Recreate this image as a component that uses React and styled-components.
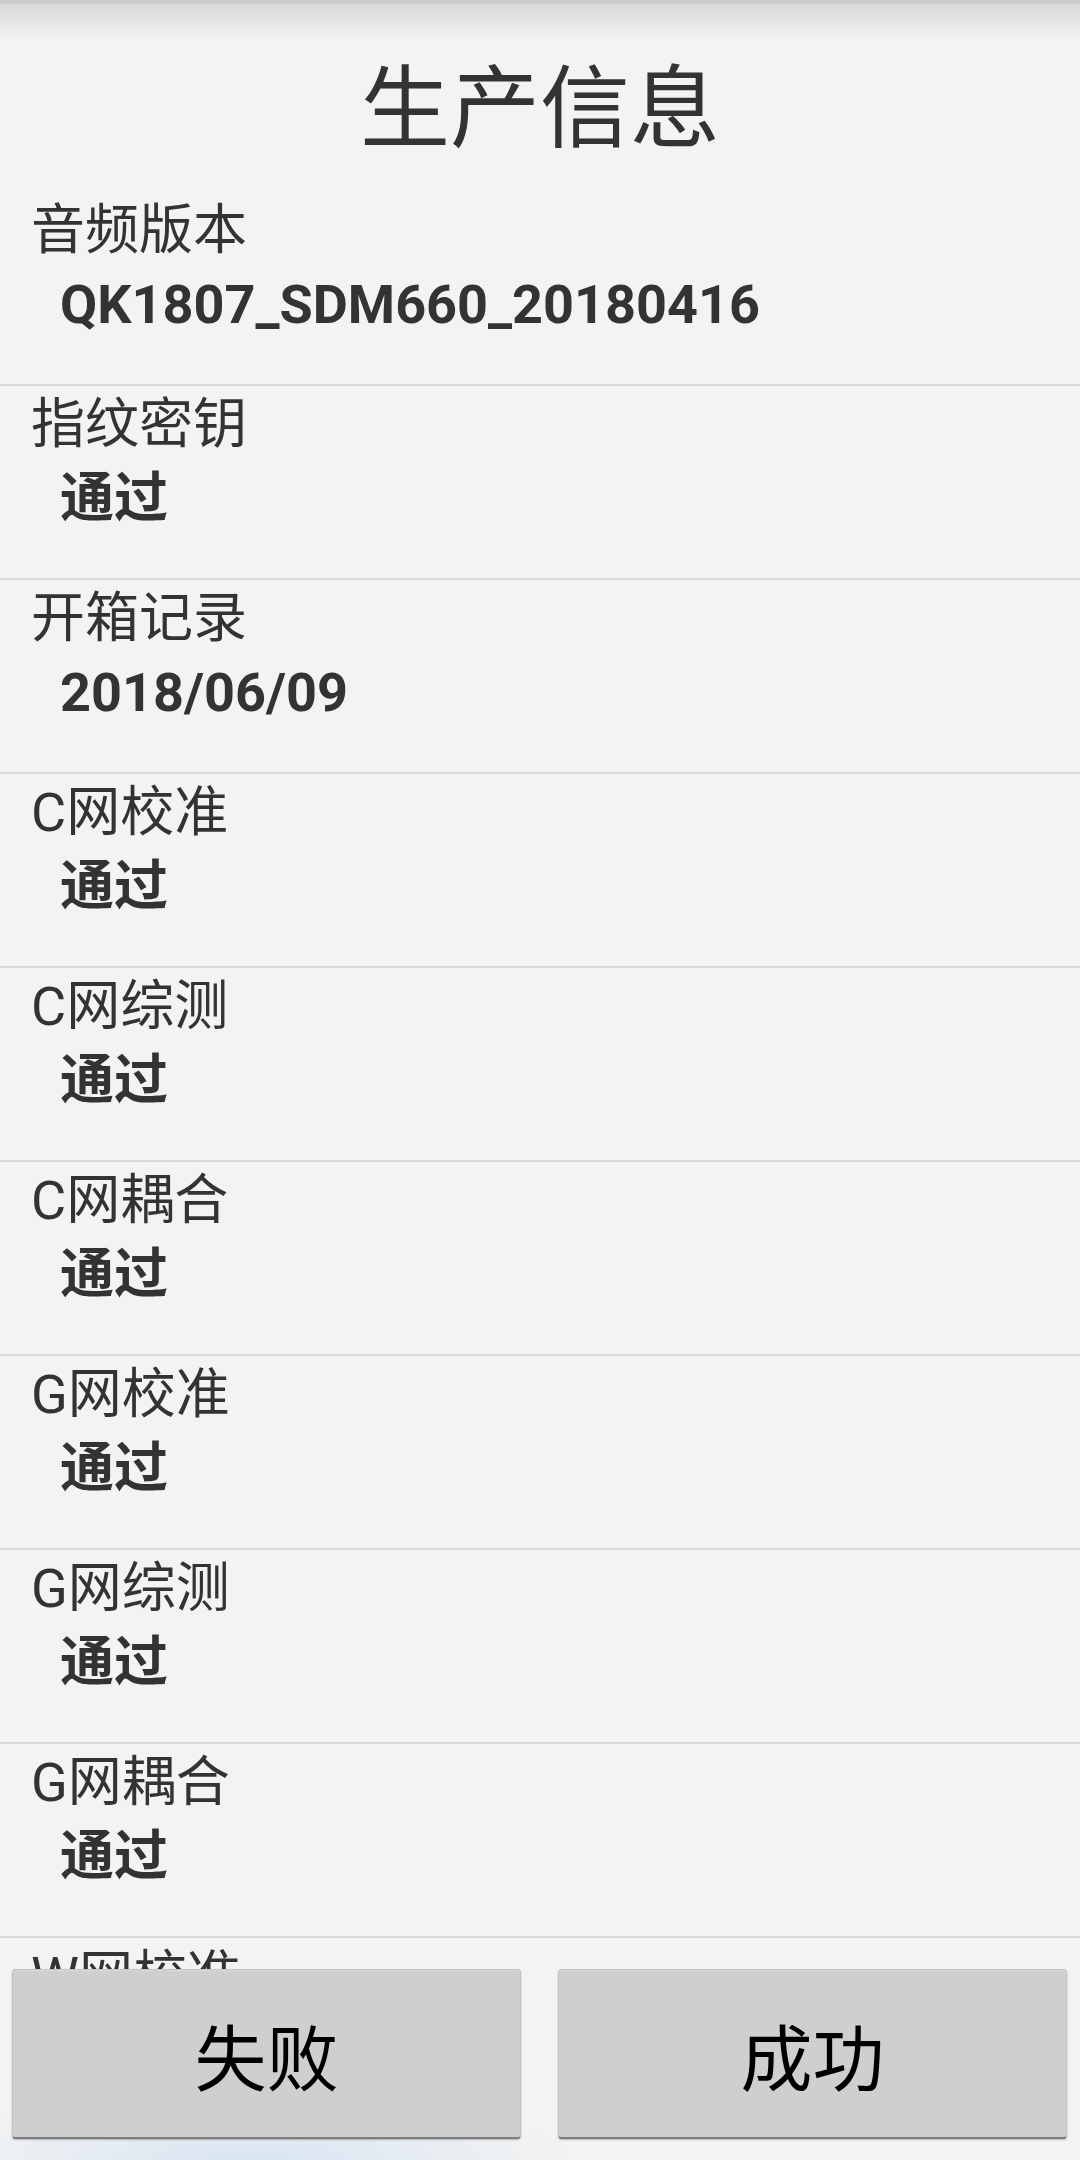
import React from 'react'
import styled, { createGlobalStyle } from 'styled-components'

const GlobalStyle = createGlobalStyle`
  html, body {
    margin: 0;
    padding: 0;
  }
  body {
    font-family: Roboto, "Noto Sans CJK SC", sans-serif;
    background: #f3f3f3;
  }
`

const Page = styled.div`
  width: 1080px;
  height: 2160px;
  display: flex;
  flex-direction: column;
  overflow: hidden;
  background:
    radial-gradient(ellipse 320px 70px at 250px 2160px, rgba(214, 228, 242, 0.95), rgba(243, 243, 243, 0)),
    linear-gradient(to bottom, #c9c9c9 0, #c9c9c9 3px, #d8d8d8 4px, #f3f3f3 40px, #f3f3f3 100%);
  color: #333333;
`

const Header = styled.div`
  height: 192px;
  flex-shrink: 0;
  box-sizing: border-box;
  padding-top: 27px;
  display: flex;
  justify-content: center;
  align-items: center;
`

const Title = styled.h1`
  margin: 0;
  font-size: 90px;
  line-height: 100px;
  font-weight: 400;
  color: #333333;
`

const List = styled.div`
  flex: 1;
  overflow: hidden;
`

const Row = styled.div`
  height: 192px;
  box-sizing: content-box;
  border-bottom: 2px solid #d9d9d9;
  padding: 0 0 0 31px;
  display: flex;
  flex-direction: column;
`

const Label = styled.div`
  margin-top: 7px;
  font-size: 54px;
  line-height: 64px;
  color: #333333;
`

const Value = styled.div`
  margin-top: 10px;
  padding-left: 29px;
  font-size: 54px;
  line-height: 64px;
  font-weight: 700;
  color: #333333;
`

const ButtonBar = styled.div`
  flex-shrink: 0;
  display: flex;
  gap: 37px;
  padding: 0 13px 21px 12px;
`

const Button = styled.button`
  flex: 1;
  height: 170px;
  background: #cfcfcf;
  border: 1px solid #c2c2c2;
  border-bottom: 2px solid #7c7c7c;
  border-radius: 4px;
  box-shadow: 0 1px 2px rgba(0, 0, 0, 0.25), inset 0 1px 0 #dadada;
  font-family: Roboto, "Noto Sans CJK SC", sans-serif;
  font-size: 72px;
  color: #000000;
  padding: 0;
`

const items = [
  ['音频版本', 'QK1807_SDM660_20180416'],
  ['指纹密钥', '通过'],
  ['开箱记录', '2018/06/09'],
  ['C网校准', '通过'],
  ['C网综测', '通过'],
  ['C网耦合', '通过'],
  ['G网校准', '通过'],
  ['G网综测', '通过'],
  ['G网耦合', '通过'],
  ['W网校准', '通过'],
  ['W网综测', '通过'],
]

const App = () => (
  <Page>
    <GlobalStyle />
    <Header>
      <Title>生产信息</Title>
    </Header>
    <List>
      {items.map(([label, value]) => (
        <Row key={label}>
          <Label>{label}</Label>
          <Value>{value}</Value>
        </Row>
      ))}
    </List>
    <ButtonBar>
      <Button>失败</Button>
      <Button>成功</Button>
    </ButtonBar>
  </Page>
)

export default App
